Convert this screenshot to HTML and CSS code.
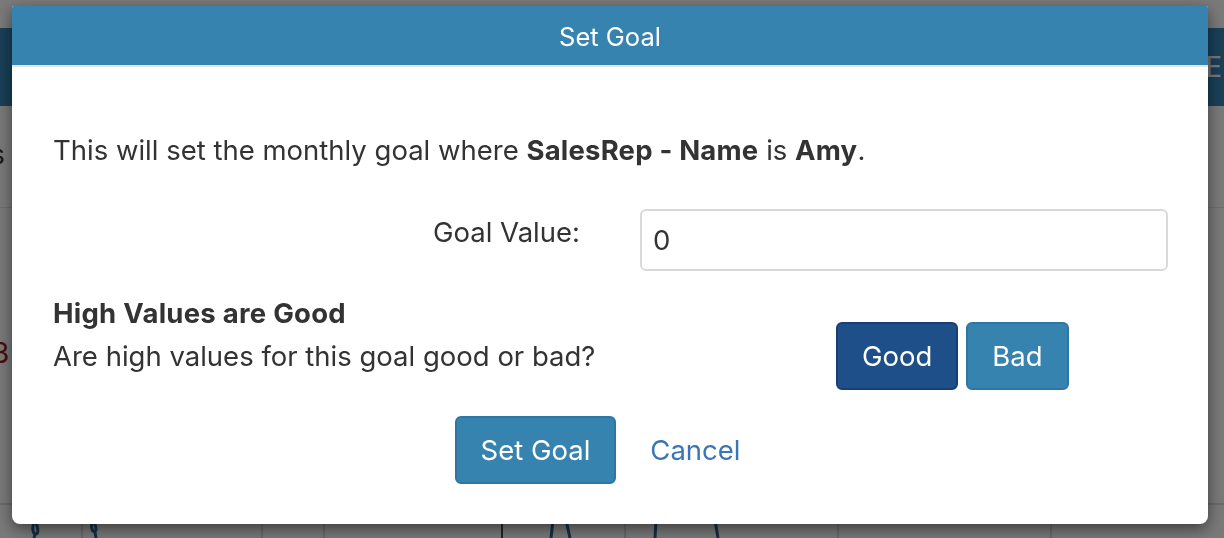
FILE: index.html
```html
<!DOCTYPE html>
<html lang="en">
<head>
<meta charset="utf-8">
<title>Set Goal</title>
<link rel="stylesheet" href="styles.css">
</head>
<body>
<div class="page">
  <div class="top-gap"></div>
  <div class="navbar"><span class="nav-text">E</span></div>
  <div class="subbar"><span class="sub-text">s</span></div>
  <div class="content">
    <span class="red-text">3'</span>
  </div>
  <svg class="chart" width="1224" height="48" viewBox="0 0 1224 48">
    <g stroke="#b4b4b4" stroke-width="1">
      <line x1="0" y1="14" x2="1224" y2="14"/>
      <line x1="82" y1="14" x2="82" y2="48"/>
      <line x1="262" y1="14" x2="262" y2="48"/>
      <line x1="324" y1="14" x2="324" y2="48"/>
      <line x1="625" y1="14" x2="625" y2="48"/>
      <line x1="838" y1="14" x2="838" y2="48"/>
      <line x1="1051" y1="14" x2="1051" y2="48"/>
    </g>
    <line x1="502" y1="14" x2="502" y2="48" stroke="#111" stroke-width="1.5"/>
    <g stroke="#2a5f8f" stroke-width="3" fill="none">
      <path d="M35 30 C31 38 33 44 36 44 C39 44 38 36 35 30 M35 44 L34 48"/>
      <path d="M93 30 C90 36 92 42 95 42 C97 40 95 34 93 30 M95 42 L96 48"/>
      <path d="M553 30 L551 48"/>
      <path d="M566 30 L570 48"/>
      <path d="M656 30 L655 48"/>
      <path d="M715 30 L718 48"/>
    </g>
  </svg>
</div>
<div class="backdrop"></div>
<div class="modal">
  <div class="modal-header">Set Goal</div>
  <div class="modal-body">
    <p class="intro">This will set the monthly goal where <strong>SalesRep - Name</strong> is <strong>Amy</strong>.</p>
    <div class="form-row">
      <label class="form-label" for="goal">Goal Value:</label>
      <input class="form-input" id="goal" type="text" value="0">
    </div>
    <div class="pref-row">
      <div class="pref-text">
        <div class="pref-title">High Values are Good</div>
        <div class="pref-desc">Are high values for this goal good or bad?</div>
      </div>
      <div class="pref-buttons">
        <button class="btn btn-active">Good</button>
        <button class="btn btn-primary">Bad</button>
      </div>
    </div>
    <div class="footer">
      <button class="btn btn-primary">Set Goal</button>
      <button class="btn btn-link">Cancel</button>
    </div>
  </div>
</div>
</body>
</html>
```

FILE: styles.css
```css
* { box-sizing: border-box; }

html, body {
  margin: 0;
  padding: 0;
  width: 1224px;
  height: 538px;
  overflow: hidden;
}

body {
  background: #f4f4f4;
  font-family: Inter, "Noto Sans", "Liberation Sans", sans-serif;
  color: #333;
}

.page {
  display: flex;
  flex-direction: column;
  height: 538px;
}

.top-gap { height: 28px; flex: none; }

.navbar {
  height: 78px;
  flex: none;
  background: #3580b0;
  display: flex;
  align-items: center;
  justify-content: flex-end;
  overflow: hidden;
}

.nav-text {
  color: #f2f2f2;
  font-size: 28px;
  margin-right: 2px;
}

.subbar {
  height: 102px;
  flex: none;
  border-bottom: 1px solid #dcdcdc;
  display: flex;
  align-items: center;
  overflow: hidden;
}

.sub-text {
  font-size: 26px;
  color: #333;
  margin-left: -9px;
  margin-top: -4px;
}

.content {
  flex: 1;
  padding-top: 128px;
  overflow: hidden;
}

.red-text {
  display: block;
  color: #8e1a1a;
  font-size: 28px;
  margin-left: -8px;
}

.chart { display: block; flex: none; }

.backdrop {
  position: fixed;
  inset: 0;
  background: rgba(0, 0, 0, 0.5);
}

.modal {
  position: absolute;
  left: 12px;
  top: 6px;
  width: 1196px;
  height: 518px;
  background: #fff;
  border-radius: 2px 2px 8px 8px;
  box-shadow: 0 5px 15px rgba(0, 0, 0, 0.5);
  overflow: hidden;
}

.modal-header {
  height: 61px;
  background: #3783b0;
  border-bottom: 2px solid #e5e5e5;
  color: #fff;
  font-size: 25.5px;
  display: flex;
  align-items: center;
  justify-content: center;
  padding-top: 2px;
}

.modal-body {
  padding: 65px 40px 40px 41px;
  font-size: 27.5px;
}

.intro {
  margin: 0;
  line-height: 36px;
}

.intro strong {
  font-weight: 700;
  letter-spacing: 0.2px;
}

.form-row {
  display: flex;
  align-items: flex-start;
  margin-top: 41px;
}

.form-label {
  width: 527px;
  text-align: right;
  line-height: 36px;
  padding-top: 5px;
  margin-right: 60px;
}

.form-input {
  flex: 1;
  height: 62px;
  border: 2px solid #d9d9d9;
  border-radius: 6px;
  padding: 0 11px;
  font-family: inherit;
  font-size: 27.5px;
  color: #333;
  outline: none;
}

.pref-row {
  display: flex;
  align-items: flex-start;
  margin-top: 21px;
}

.pref-text {
  width: 783px;
  line-height: 43px;
}

.pref-title {
  font-weight: 700;
  letter-spacing: 0.25px;
}

.pref-buttons {
  display: flex;
  gap: 8px;
  margin-top: 30px;
}

.btn {
  height: 68px;
  padding: 0 24px;
  border-radius: 6px;
  border: 2px solid transparent;
  font-family: inherit;
  font-size: 27.5px;
  color: #fff;
  cursor: pointer;
}

.btn-primary {
  background: #3783b0;
  border-color: #2f76a3;
}

.btn-active {
  background: #1f4f88;
  border-color: #183f74;
}

.btn-link {
  background: transparent;
  color: #3b76b4;
}

.footer {
  display: flex;
  justify-content: center;
  gap: 8px;
  margin-top: 26px;
}
```
